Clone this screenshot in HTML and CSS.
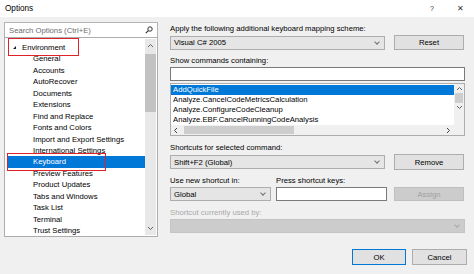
FILE: index.html
```html
<!DOCTYPE html>
<html lang="en">

<head>
    <meta charset="UTF-8">
    <title>Options</title>
    <link rel="stylesheet" href="styles.css">
</head>

<body>
    <div class="window">
        <!-- 标题栏 -->
        <header class="titlebar">
            <span class="title">Options</span>
            <span class="caption_btn help">?</span>
            <span class="caption_btn close">&#x2715;</span>
        </header>

        <div class="dialog">
            <!-- 左侧树 -->
            <section class="left">
                <div class="search">
                    <span class="search_text">Search Options (Ctrl+E)</span>
                    <svg class="search_icon" width="8" height="8" viewBox="0 0 8 8">
                        <circle cx="5" cy="3" r="2.2" fill="none" stroke="#333" stroke-width="1" />
                        <line x1="3.4" y1="4.6" x2="0.8" y2="7.2" stroke="#333" stroke-width="1.2" />
                    </svg>
                </div>
                <div class="tree">
                    <ul class="tree_list">
                        <li class="node root"><span class="arrow"></span>Environment</li>
                        <li class="node">General</li>
                        <li class="node">Accounts</li>
                        <li class="node">AutoRecover</li>
                        <li class="node">Documents</li>
                        <li class="node">Extensions</li>
                        <li class="node">Find and Replace</li>
                        <li class="node">Fonts and Colors</li>
                        <li class="node">Import and Export Settings</li>
                        <li class="node">International Settings</li>
                        <li class="node selected">Keyboard</li>
                        <li class="node">Preview Features</li>
                        <li class="node">Product Updates</li>
                        <li class="node">Tabs and Windows</li>
                        <li class="node">Task List</li>
                        <li class="node">Terminal</li>
                        <li class="node">Trust Settings</li>
                    </ul>
                    <div class="vscroll">
                        <svg class="chev" width="7" height="5" viewBox="0 0 7 5"><polyline points="1,4 3.5,1.5 6,4" fill="none" stroke="#606060" stroke-width="1" /></svg>
                        <div class="track"><div class="thumb"></div></div>
                        <svg class="chev" width="7" height="5" viewBox="0 0 7 5"><polyline points="1,1 3.5,3.5 6,1" fill="none" stroke="#606060" stroke-width="1" /></svg>
                    </div>
                    <!-- 红色标注框 -->
                    <div class="mark mark_env"></div>
                    <div class="mark mark_key"></div>
                </div>
            </section>

            <!-- 右侧设置 -->
            <section class="right">
                <p class="label l1">Apply the following additional keyboard mapping scheme:</p>
                <div class="row r1">
                    <div class="combo wide">Visual C# 2005<span class="down"></span></div>
                    <button class="btn">Reset</button>
                </div>

                <p class="label l2">Show commands containing:</p>
                <div class="textbox full"></div>
                <div class="cmdlist">
                    <div class="cmd_main">
                        <ul class="cmd_items">
                            <li class="cmd selected">AddQuickFile</li>
                            <li class="cmd">Analyze.CancelCodeMetricsCalculation</li>
                            <li class="cmd">Analyze.ConfigureCodeCleanup</li>
                            <li class="cmd">Analyze.EBF.CancelRunningCodeAnalysis</li>
                        </ul>
                        <div class="hscroll">
                            <svg width="5" height="7" viewBox="0 0 5 7"><polyline points="4,1 1.5,3.5 4,6" fill="none" stroke="#404040" stroke-width="1" /></svg>
                            <div class="hthumb"></div>
                            <svg class="hright" width="5" height="7" viewBox="0 0 5 7"><polyline points="1,1 3.5,3.5 1,6" fill="none" stroke="#404040" stroke-width="1" /></svg>
                        </div>
                    </div>
                    <div class="cmd_vscroll">
                        <svg width="7" height="5" viewBox="0 0 7 5"><polyline points="1,4 3.5,1.5 6,4" fill="none" stroke="#606060" stroke-width="1" /></svg>
                        <div class="cthumb"></div>
                        <svg width="7" height="5" viewBox="0 0 7 5"><polyline points="1,1 3.5,3.5 6,1" fill="none" stroke="#606060" stroke-width="1" /></svg>
                    </div>
                </div>

                <p class="label l3">Shortcuts for selected command:</p>
                <div class="row r2">
                    <div class="combo wide">Shift+F2 (Global)<span class="down"></span></div>
                    <button class="btn tall">Remove</button>
                </div>

                <div class="row r3">
                    <p class="label use">Use new shortcut in:</p>
                    <p class="label">Press shortcut keys:</p>
                </div>
                <div class="row r4">
                    <div class="combo small">Global<span class="down"></span></div>
                    <div class="textbox keys"></div>
                    <button class="btn disabled">Assign</button>
                </div>

                <p class="label disabled_text l4">Shortcut currently used by:</p>
                <div class="combo full disabled"><span class="down"></span></div>

                <div class="row footer">
                    <button class="btn ok">OK</button>
                    <button class="btn cancel">Cancel</button>
                </div>
            </section>
        </div>
    </div>
</body>

</html>
```

FILE: styles.css
```css
* {
    padding: 0;
    margin: 0;
    box-sizing: border-box;
}

body {
    width: 474px;
    height: 274px;
    overflow: hidden;
    background-color: #f0f0f0;
    font-family: "Liberation Sans", "Noto Sans", sans-serif;
    font-size: 7.7px;
    color: #000000;
}

ul {
    list-style: none;
}

.titlebar {
    height: 17px;
    background-color: #ffffff;
    display: flex;
    align-items: center;
    padding-left: 5px;
    font-size: 8.2px;
}

.title {
    flex: 1;
}

.caption_btn {
    width: 28px;
    text-align: center;
    color: #333333;
}

.help {
    font-size: 7px;
    margin-right: 0;
}

.close {
    font-size: 8px;
}

.dialog {
    display: flex;
    padding-left: 4px;
    gap: 12px;
}

/* 左侧 */
.left {
    width: 154px;
}

.search {
    margin-top: 5px;
    height: 15px;
    border: 1px solid #b4b4b4;
    border-bottom: none;
    background-color: #ffffff;
    display: flex;
    align-items: center;
    padding: 0 4px 0 4px;
}

.search_text {
    flex: 1;
    color: #6d6d6d;
}

.tree {
    position: relative;
    height: 200px;
    border: 1px solid #adadad;
    background-color: #ffffff;
    display: flex;
}

.tree_list {
    flex: 1;
    padding-top: 4px;
}

.node {
    height: 11.45px;
    line-height: 11.45px;
    padding-left: 28px;
    white-space: nowrap;
}

.node.root {
    padding-left: 8px;
    display: flex;
    align-items: center;
}

.arrow {
    width: 0;
    height: 0;
    border-left: 3px solid transparent;
    border-bottom: 3px solid #1e1e1e;
    margin-right: 6px;
}

.node.selected {
    background-color: #0078d7;
    color: #ffffff;
    margin-left: 3px;
    padding-left: 25px;
}

.vscroll {
    width: 11px;
    background-color: #e8e8e8;
    display: flex;
    flex-direction: column;
    align-items: center;
    margin: 1px 1px 1px 0;
}

.vscroll .chev {
    margin: 4px 0;
}

.track {
    flex: 1;
    width: 100%;
}

.thumb {
    margin-top: 2px;
    height: 58px;
    background-color: #c2c2c2;
}

.mark {
    position: absolute;
    border: 1px solid #e0202a;
}

.mark_env {
    left: 3px;
    top: 0;
    width: 71px;
    height: 18px;
}

.mark_key {
    left: 2px;
    top: 115px;
    width: 99px;
    height: 18px;
}

/* 右侧 */
.right {
    width: 296px;
}

.label {
    height: 11px;
    line-height: 11px;
    white-space: nowrap;
}

.l1 {
    margin-top: 6px;
}

.row {
    display: flex;
    align-items: center;
}

.r1 {
    margin-top: 1px;
    gap: 9px;
}

.combo {
    height: 14px;
    border: 1px solid #adadad;
    background-color: #e5e5e5;
    display: flex;
    align-items: center;
    padding-left: 3px;
    position: relative;
}

.down {
    position: absolute;
    right: 5px;
    top: 3px;
    width: 4px;
    height: 4px;
    border-right: 1px solid #707070;
    border-bottom: 1px solid #707070;
    transform: rotate(45deg);
}

.wide {
    width: 215px;
}

.small {
    width: 101px;
}

.full {
    width: 295px;
}

.btn {
    width: 70px;
    height: 15px;
    border: 1px solid #adadad;
    background-color: #e1e1e1;
    font-family: inherit;
    font-size: 7.7px;
    color: #000000;
}

.btn.tall {
    height: 16px;
}

.btn.disabled {
    background-color: #cccccc;
    border-color: #bfbfbf;
    color: #a0a0a0;
    height: 14px;
}

.l2 {
    margin-top: 5px;
}

.textbox {
    height: 14px;
    border: 1px solid #7a7a7a;
    background-color: #ffffff;
}

.textbox.full {
    margin-top: 1px;
}

.cmdlist {
    margin-top: 2px;
    width: 295px;
    height: 53px;
    border: 1px solid #adadad;
    background-color: #ffffff;
    display: flex;
}

.cmd_main {
    flex: 1;
    display: flex;
    flex-direction: column;
}

.cmd_items {
    flex: 1;
    padding-top: 1px;
}

.cmd {
    height: 10px;
    line-height: 10px;
    padding-left: 2px;
    white-space: nowrap;
}

.cmd.selected {
    background-color: #0078d7;
    color: #ffffff;
}

.hscroll {
    height: 10px;
    background-color: #f0f0f0;
    display: flex;
    align-items: center;
    padding-left: 2px;
}

.hthumb {
    width: 110px;
    height: 8px;
    background-color: #cdcdcd;
    margin-left: 6px;
}

.hright {
    margin-left: auto;
    margin-right: 3px;
}

.cmd_vscroll {
    width: 10px;
    background-color: #f0f0f0;
    display: flex;
    flex-direction: column;
    align-items: center;
    gap: 2px;
    padding-top: 2px;
}

.cthumb {
    width: 8px;
    height: 10px;
    background-color: #cdcdcd;
}

.l3 {
    margin-top: 6px;
}

.r2 {
    margin-top: 1px;
    gap: 9px;
}

.r3 {
    margin-top: 5px;
}

.use {
    width: 106px;
}

.r4 {
    margin-top: 1px;
    gap: 5px;
}

.keys {
    width: 111px;
    margin-right: 2px;
}

.disabled_text {
    color: #a8a8a8;
}

.l4 {
    margin-top: 6px;
}

.combo.disabled {
    margin-top: 1px;
    background-color: #cccccc;
    border-color: #c4c4c4;
}

.combo.disabled .down {
    border-color: #a8a8a8;
}

.footer {
    margin-top: 16px;
    justify-content: flex-end;
    gap: 6px;
    padding-right: 0;
    width: 297px;
}

.ok {
    width: 54px;
    border-color: #0078d7;
    height: 16px;
}

.cancel {
    width: 55px;
    height: 16px;
}
```
